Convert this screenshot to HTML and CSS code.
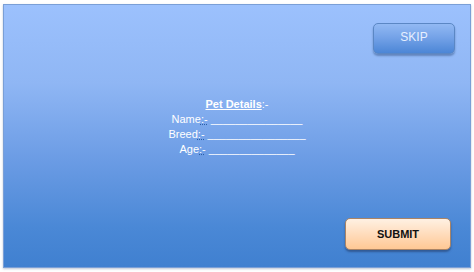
FILE: index.html
```html
<!DOCTYPE html>
<html>
<head>
<meta charset="utf-8">
<link rel="stylesheet" href="styles.css">
</head>
<body>
<div class="panel">
  <button class="btn skip">SKIP</button>
  <div class="details">
    <div class="line"><span class="title">Pet Details</span>:-</div>
    <div class="line">Name<span class="mark">:-</span> _______________</div>
    <div class="line">Breed<span class="mark">:-</span> ________________</div>
    <div class="line">Age<span class="mark">:-</span> ______________</div>
  </div>
  <button class="btn submit">SUBMIT</button>
</div>
</body>
</html>
```
FILE: styles.css
```css
html, body {
  margin: 0;
  padding: 0;
  background: #ffffff;
}
body {
  width: 474px;
  height: 272px;
  overflow: hidden;
  font-family: "Liberation Sans", Arial, sans-serif;
}
.panel {
  box-sizing: border-box;
  margin: 4px 3px 0 3px;
  width: 468px;
  height: 264px;
  border: 1px solid #7a9fd6;
  background: linear-gradient(to bottom, #9cc1fd 0%, #8fb6f4 30%, #6a9be4 60%, #4a88d6 85%, #4080d0 100%);
  box-shadow: 0 1px 2px rgba(120,140,170,0.5);
  display: flex;
  flex-direction: column;
  padding: 18px 15px 17px 15px;
}
.btn {
  font-family: "Liberation Sans", Arial, sans-serif;
  border-radius: 5px;
  padding: 0;
  margin: 0;
}
.skip {
  align-self: flex-end;
  width: 82px;
  height: 31px;
  font-size: 12px;
  color: #e6efff;
  background: linear-gradient(to bottom, #92b9f3 0%, #75a3e8 45%, #4c86d6 100%);
  border: 1px solid #5b87c4;
  box-shadow: 0 2px 2px rgba(40,70,120,0.45);
  padding-bottom: 3px;
}
.details {
  margin-top: 43px;
  text-align: center;
  color: #ffffff;
  font-size: 11px;
  line-height: 15px;
}
.title {
  font-weight: bold;
  text-decoration: underline;
}
.mark {
  text-decoration: underline dotted #2a5fa8;
}
.submit {
  margin-top: auto;
  align-self: flex-end;
  margin-right: 4px;
  width: 106px;
  height: 32px;
  font-size: 11px;
  font-weight: bold;
  color: #111111;
  background: linear-gradient(to bottom, #fff1e3 0%, #ffdcbc 50%, #ffc894 100%);
  border: 1px solid #a98466;
  box-shadow: 0 2px 2px rgba(30,50,90,0.5);
}
```
